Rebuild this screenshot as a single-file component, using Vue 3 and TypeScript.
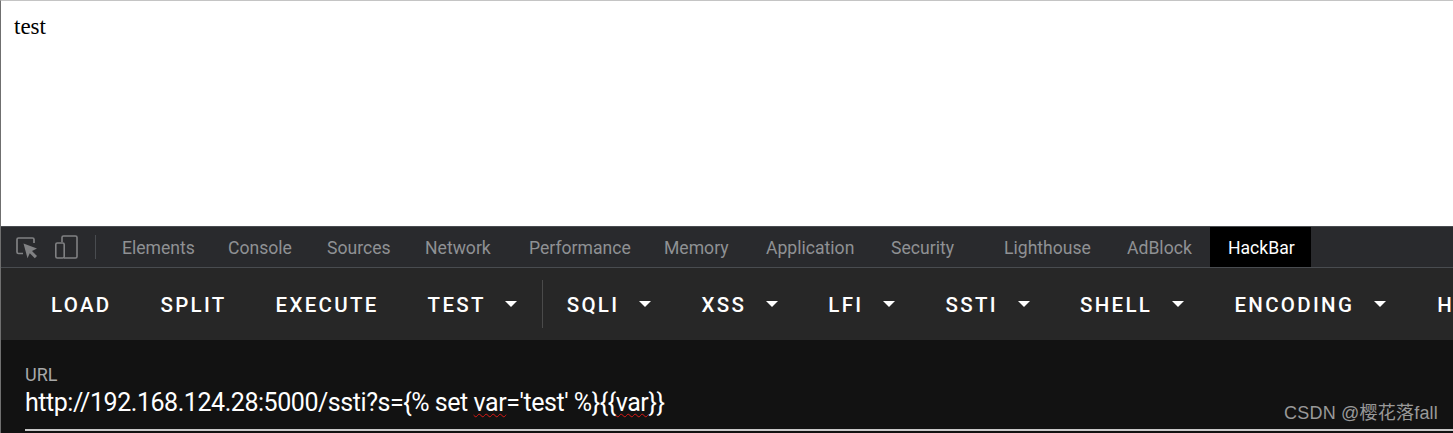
<script setup lang="ts">
const tabs = [
  { label: 'Elements', width: 106 },
  { label: 'Console', width: 99 },
  { label: 'Sources', width: 98 },
  { label: 'Network', width: 104 },
  { label: 'Performance', width: 135 },
  { label: 'Memory', width: 102 },
  { label: 'Application', width: 125 },
  { label: 'Security', width: 113 },
  { label: 'Lighthouse', width: 123 },
  { label: 'AdBlock', width: 101 },
]
const plain = ['LOAD', 'SPLIT', 'EXECUTE']
const menus = ['SQLI', 'XSS', 'LFI', 'SSTI', 'SHELL', 'ENCODING']
</script>

<template>
  <div class="frame">
    <div class="page">test</div>
    <div class="tabbar">
      <div class="tools">
        <svg class="tool" width="24" height="24" viewBox="0 0 24 24" fill="none">
          <path d="M8 18.500H3.500a1.500 1.500 0 0 1-1.500-1.500V4.500A1.500 1.500 0 0 1 3.500 3h14A1.500 1.500 0 0 1 19 4.500V8" stroke="#808183" stroke-width="1.700" />
          <path d="M8.500 8.500 22 13.500l-5 2.500 5 5-2.200 2.200-5-5-2.300 5z" fill="#808183" />
        </svg>
        <svg class="tool device" width="24" height="24" viewBox="0 0 24 24" fill="none">
          <path d="M8 7V2.500A1.500 1.500 0 0 1 9.500 1h12A1.500 1.500 0 0 1 23 2.500v19a1.500 1.500 0 0 1-1.500 1.500H10" stroke="#808183" stroke-width="1.600" />
          <rect x="1.800" y="8" width="8.400" height="15" rx="1.500" stroke="#808183" stroke-width="1.600" />
        </svg>
        <span class="sep"></span>
      </div>
      <span v-for="t in tabs" :key="t.label" class="tab" :style="{ width: t.width + 'px' }">{{ t.label }}</span>
      <span class="tab active">HackBar</span>
    </div>
    <div class="toolbar">
      <button v-for="b in plain" :key="b" class="btn">{{ b }}</button>
      <button class="btn">TEST<i class="caret"></i></button>
      <span class="divider"></span>
      <button v-for="m in menus" :key="m" class="btn menu">{{ m }}<i class="caret"></i></button>
      <button class="btn">HELP</button>
    </div>
    <div class="body">
      <label class="label">URL</label>
      <div class="field">http://192.168.124.28:5000/ssti?s={% set <span class="typo">var</span>='test' %}{{ '{{' }}<span class="typo">var</span>}}</div>
      <div class="mark">CSDN @樱花落fall</div>
    </div>
  </div>
</template>

<style scoped>
.frame {
  position: relative;
  width: 1453px;
  height: 433px;
  box-sizing: border-box;
  border-left: 1px solid #6f6f6f;
  border-top: 1px solid #c4c4c4;
  display: flex;
  flex-direction: column;
  overflow: hidden;
}
.page {
  height: 225px;
  background: #fff;
  box-sizing: border-box;
  padding: 14px 0 0 13px;
  font: 23px/24px "Liberation Serif", serif;
  color: #000;
}
.tabbar {
  height: 42px;
  box-sizing: border-box;
  background: #292a2d;
  border-top: 1px solid #494c50;
  border-bottom: 1px solid #494c50;
  display: flex;
  align-items: stretch;
  font: 17.600px "Roboto", sans-serif;
  color: #8f9194;
}
.tools {
  display: flex;
  align-items: center;
  padding-left: 14px;
}
.tool { flex: none; }
.device { margin-left: 15px; }
.sep {
  width: 1px;
  height: 24px;
  margin: 0 8px 0 17px;
  background: #494c50;
}
.tab {
  box-sizing: border-box;
  flex: none;
  padding: 2px 18px 0;
  display: flex;
  align-items: center;
}
.active {
  width: 101px;
  background: #000;
  color: #fff;
}
.toolbar {
  height: 72px;
  flex: none;
  background: #272727;
  display: flex;
  align-items: center;
  padding-left: 25.600px;
  white-space: nowrap;
}
.btn {
  flex: none;
  border: 0;
  background: none;
  padding: 2px 24.600px 0 24.400px;
  height: 52px;
  color: #fff;
  font: 500 20.500px "Roboto", sans-serif;
  letter-spacing: 2.300px;
  display: flex;
  align-items: center;
}
.menu { padding: 2px 26.900px 0 23.600px; }
.caret {
  width: 0;
  height: 0;
  margin: -2px 0 0 19.700px;
  border-left: 6px solid transparent;
  border-right: 6px solid transparent;
  border-top: 6px solid #fff;
}
.divider {
  flex: none;
  width: 1px;
  height: 48px;
  background: #4a4a4a;
}
.body {
  position: relative;
  flex: 1;
  background: #121212;
  padding: 25px 0 0 24px;
}
.label {
  display: block;
  font: 18px/20px "Roboto", sans-serif;
  color: #a8a8a8;
}
.field {
  height: 46px;
  box-sizing: border-box;
  border-bottom: 2px solid #c8c8c8;
  font: 25px/36px "Roboto", sans-serif;
  letter-spacing: -0.450px;
  color: #fff;
  white-space: nowrap;
}
.typo {
  text-decoration: underline wavy #d81a16 1px;
  text-underline-offset: 2px;
}
.mark {
  position: absolute;
  right: 15px;
  bottom: 9px;
  font: 18px/22px "Liberation Sans", "Noto Sans CJK SC", sans-serif;
  letter-spacing: 0.200px;
  color: #999;
}
</style>
